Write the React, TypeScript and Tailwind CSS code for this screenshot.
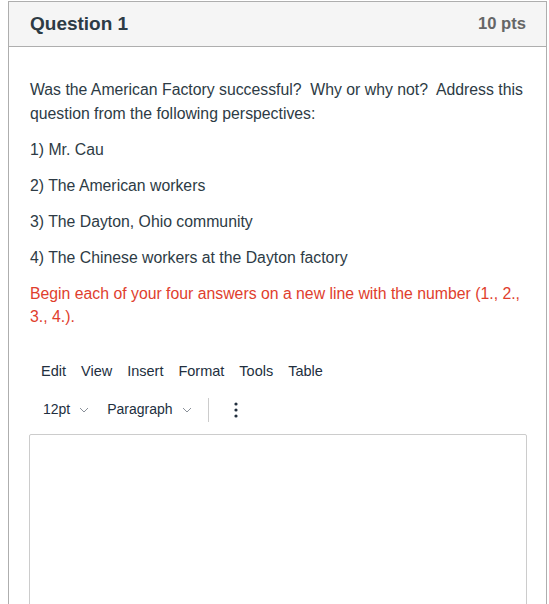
import React from "react";

const font = { fontFamily: '"Liberation Sans", Arial, sans-serif' };

const MENU = ["Edit", "View", "Insert", "Format", "Tools", "Table"];

const PARTS = [
  "1) Mr. Cau",
  "2) The American workers",
  "3) The Dayton, Ohio community",
  "4) The Chinese workers at the Dayton factory",
];

function Chevron() {
  return (
    <svg width="10" height="6" viewBox="0 0 10 6" className="ml-[9px]">
      <path d="M1 1l4 4 4-4" fill="none" stroke="#8a9099" strokeWidth="1" />
    </svg>
  );
}

export default function App() {
  return (
    <div className="bg-white min-h-[604px] pt-px pl-[8px] pr-[2px]" style={font}>
      <div className="border border-[#aeaeae] border-b-0 h-[610px]">
        {/* Header */}
        <div className="h-[45px] pt-px bg-[#f5f5f5] border-b border-[#aeaeae] flex items-center justify-between pl-[21px] pr-[20px]">
          <h2 className="text-[19px] font-bold text-[#2d3b45]">Question 1</h2>
          <span className="text-[16.6px] font-bold text-[#666666]">10 pts</span>
        </div>

        {/* Body */}
        <div className="pl-[21px] pr-[20px] pt-[31px] text-[15.8px] leading-[23.5px] text-[#2d3b45]">
          <p>
            Was the American Factory successful?&nbsp; Why or why not?&nbsp; Address this question from
            the following perspectives:
          </p>
          {PARTS.map((part) => (
            <p key={part} className="mt-[12.5px]">
              {part}
            </p>
          ))}
          <p className="mt-[12.5px] text-[#e03e2d]">
            Begin each of your four answers on a new line with the number (1., 2., 3., 4.).
          </p>

          {/* Editor */}
          <div className="mt-[30px] -ml-px mr-[-1px]">
            <div className="flex items-center h-[27px] pl-[12px] gap-[15px] text-[14.5px] text-[#222f3e]">
              {MENU.map((m) => (
                <span key={m}>{m}</span>
              ))}
            </div>
            <div className="flex items-center h-[34px] mt-[7px] pl-[14px] text-[14px] text-[#222f3e]">
              <span className="flex items-center">
                12pt
                <Chevron />
              </span>
              <span className="flex items-center ml-[18px]">
                Paragraph
                <Chevron />
              </span>
              <span className="w-px h-[24px] bg-[#cccccc] ml-[16px]" />
              <svg width="4" height="16" viewBox="0 0 4 16" className="ml-[25px]">
                <circle cx="2" cy="2" r="1.6" fill="#222f3e" />
                <circle cx="2" cy="8" r="1.6" fill="#222f3e" />
                <circle cx="2" cy="14" r="1.6" fill="#222f3e" />
              </svg>
            </div>
            <div className="mt-[7px] h-[200px] border border-[#cccccc] rounded-t-[2px]" />
          </div>
        </div>
      </div>
    </div>
  );
}
